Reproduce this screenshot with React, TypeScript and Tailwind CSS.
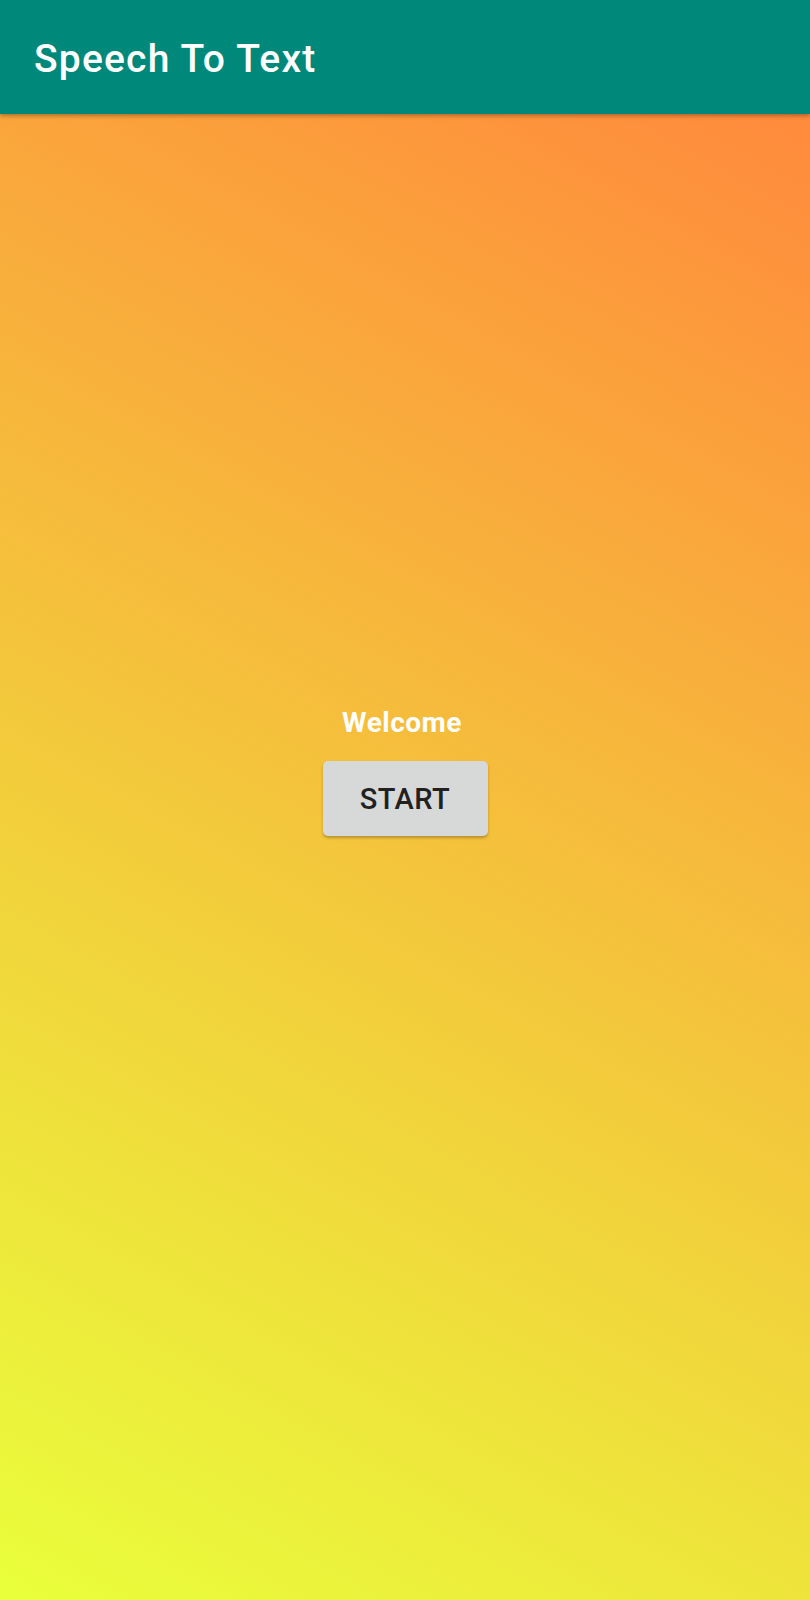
import React from 'react'

export default function App() {
  return (
    <div className="flex min-h-[1600px] w-full flex-col font-['Roboto',sans-serif]">
      <header className="relative z-10 h-[114px] shrink-0 bg-[#00897b] pl-[34px] pt-[37px] shadow-[0_2px_4px_rgba(0,0,0,0.3)]">
        <h1 className="text-[39px] leading-[44px] font-medium tracking-[1.2px] text-white">Speech To Text</h1>
      </header>

      <main className="flex flex-1 flex-col items-center bg-[linear-gradient(29deg,#e9ff3b,#ff8a3c)] pt-[593px]">
        <p className="-ml-[6px] text-[28px] leading-[31px] font-bold tracking-[0.5px] text-white">Welcome</p>
        <button className="mt-[23px] h-[75px] w-[165px] rounded-[5px] bg-[#d7d8d8] text-[29px] leading-[34px] font-medium tracking-[0.5px] text-[#212121] shadow-[0_2px_3px_rgba(0,0,0,0.25)]">
          START
        </button>
      </main>
    </div>
  )
}
